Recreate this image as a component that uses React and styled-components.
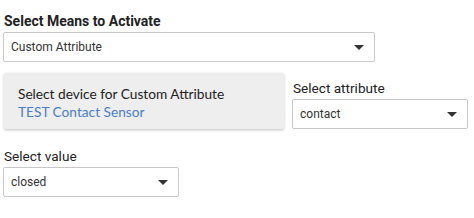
import React from "react";
import styled, { createGlobalStyle } from "styled-components";

const Global = createGlobalStyle`
  html, body { margin: 0; padding: 0; background: #fff; }
  body { font-family: Roboto, "Liberation Sans", sans-serif; color: #222; }
`;

const Page = styled.div`
  padding: 13px 0 0 3px;
  display: flex;
  flex-direction: column;
`;

const Field = styled.div`
  display: flex;
  flex-direction: column;
  width: ${(p) => p.$w}px;
`;

const Label = styled.div`
  font-size: ${(p) => (p.$bold ? 14 : 13.6)}px;
  line-height: 17px;
  font-weight: ${(p) => (p.$bold ? 700 : 400)};
  color: #222;
  padding-left: 1px;
  margin-bottom: 2px;
`;

const SelectBox = styled.div`
  height: 30px;
  box-sizing: border-box;
  border: 1px solid #c8c8c8;
  border-radius: 2px;
  background: #fff;
  display: flex;
  align-items: center;
  justify-content: space-between;
  padding: 0 8px 0 7px;
  font-size: 12px;
  color: #333;
`;

const Caret = styled.span`
  width: 0;
  height: 0;
  border-left: 5px solid transparent;
  border-right: 5px solid transparent;
  border-top: 5px solid #333;
  margin-right: 2px;
`;

const Row = styled.div`
  display: flex;
  align-items: flex-start;
  gap: 8px;
  margin-top: 11px;
`;

const Card = styled.div`
  width: 280px;
  height: 56px;
  box-sizing: border-box;
  margin-left: 1px;
  background: #eeeeee;
  border-radius: 2px;
  box-shadow: 0 1px 3px rgba(0, 0, 0, 0.25);
  padding: 12px 14px;
  font-family: Lato, "Open Sans", sans-serif;
  font-size: 13.7px;
  line-height: 18px;
`;

const CardTitle = styled.div`
  color: #222;
`;

const CardLink = styled.div`
  color: #4a7dc8;
`;

const Attr = styled(Field)`
  margin-top: 7px;
`;

const ValueField = styled(Field)`
  margin-top: 19px;
`;

function Select({ value }) {
  return (
    <SelectBox>
      <span>{value}</span>
      <Caret />
    </SelectBox>
  );
}

export default function App() {
  return (
    <>
      <Global />
      <Page>
        <Field $w={372}>
          <Label $bold>Select Means to Activate</Label>
          <Select value="Custom Attribute" />
        </Field>
        <Row>
          <Card>
            <CardTitle>Select device for Custom Attribute</CardTitle>
            <CardLink>TEST Contact Sensor</CardLink>
          </Card>
          <Attr $w={176}>
            <Label>Select attribute</Label>
            <Select value="contact" />
          </Attr>
        </Row>
        <ValueField $w={176}>
          <Label>Select value</Label>
          <Select value="closed" />
        </ValueField>
      </Page>
    </>
  );
}
